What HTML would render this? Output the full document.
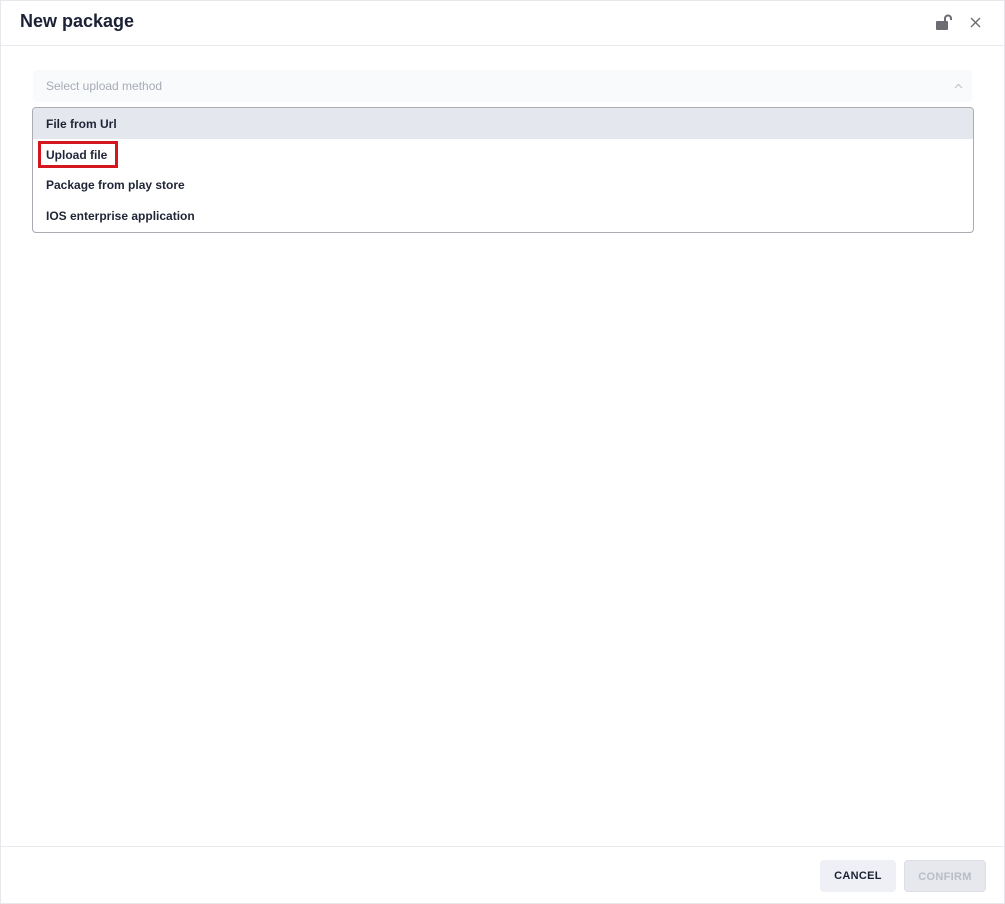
<!DOCTYPE html>
<html><head><style>
*{box-sizing:border-box;margin:0;padding:0}
body{width:1005px;height:904px;background:#fff;font-family:"Liberation Sans",sans-serif;position:relative;overflow:hidden}
.frame{position:absolute;left:0;top:0;width:1005px;height:904px;border:1px solid #e6e8ec;pointer-events:none}
.hdr{position:absolute;left:0;top:0;width:1005px;height:46px;border-bottom:1px solid #e8eaee}
.hdr h1{position:absolute;left:20px;top:11px;font-size:18px;font-weight:bold;color:#1c2236}
.sel{position:absolute;left:33px;top:70px;width:939px;height:32px;background:#f9fafc;border-radius:4px;color:#a6abb5;font-size:12px;padding:9px 13px}
.dd{position:absolute;left:32px;top:107px;width:942px;height:126px;border:1px solid #a9acb3;border-radius:4px;overflow:hidden}
.it{height:30.5px;font-size:12px;font-weight:bold;color:#1f2536;padding:9px 13px}
.it.a{background:#e4e7ee}
.red{position:absolute;left:38px;top:141px;width:80px;height:27px;border:3px solid #d4161f}
.ftr{position:absolute;left:0;top:846px;width:1005px;border-top:1px solid #e8eaee}
.btn{position:absolute;top:860px;height:32px;border-radius:4px;font-size:11px;font-weight:bold;text-align:center;line-height:32px;letter-spacing:.3px}
</style></head><body>
<div class="hdr"><h1>New package</h1>
<svg style="position:absolute;left:935px;top:14px" width="19" height="17" viewBox="0 0 19 17"><rect x="1" y="7" width="12" height="9" rx="1" fill="#6b6d72"/><path d="M10 7V4.5a3 3 0 0 1 6 0V6" stroke="#6b6d72" stroke-width="2" fill="none"/></svg>
<svg style="position:absolute;left:970px;top:17px" width="11" height="11" viewBox="0 0 11 11"><path d="M1 1L10 10M10 1L1 10" stroke="#6b6d72" stroke-width="1.4"/></svg>
</div>
<div class="sel">Select upload method<svg style="position:absolute;right:9px;top:13px" width="9" height="6" viewBox="0 0 9 6"><path d="M1 5L4.5 1.5L8 5" stroke="#c0c4cc" stroke-width="1.2" fill="none"/></svg></div>
<div class="dd">
<div class="it a">File from Url</div>
<div class="it">Upload file</div>
<div class="it">Package from play store</div>
<div class="it">IOS enterprise application</div>
</div>
<div class="red"></div>
<div class="ftr"></div>
<div class="btn" style="left:820px;width:76px;background:#eef0f5;color:#1c2236">CANCEL</div>
<div class="btn" style="left:904px;width:82px;background:#e6e8ee;color:#b9bdc7;border:1px solid #dcdfe5">CONFIRM</div>
<div class="frame"></div>
</body></html>
